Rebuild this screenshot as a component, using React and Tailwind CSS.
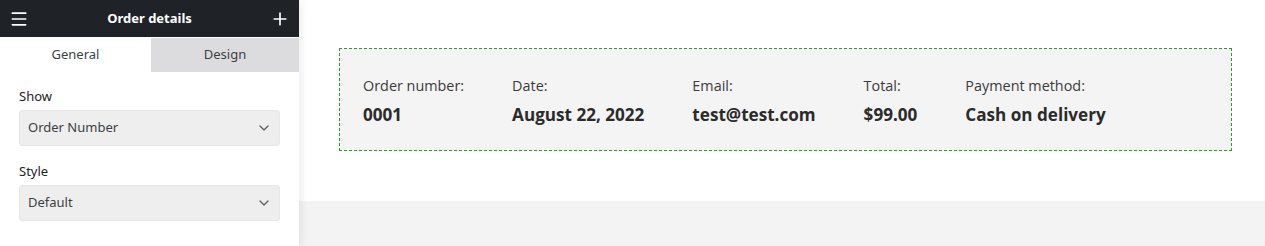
import { ChevronDown, Menu, Plus } from "lucide-react";

const fields = [
  { label: "Order number:", value: "0001" },
  { label: "Date:", value: "August 22, 2022" },
  { label: "Email:", value: "test@test.com" },
  { label: "Total:", value: "$99.00" },
  { label: "Payment method:", value: "Cash on delivery" },
];

function SelectBox({ label, value }) {
  return (
    <div className="px-[19px]">
      <label className="block text-[13px] text-[#1f2124] leading-[16px] mb-[6px]">
        {label}
      </label>
      <div className="h-[36px] bg-[#eeeeee] rounded-[3px] border border-[#e6e6e6] flex items-center justify-between pl-[8px] pr-[7px] text-[13px] text-[#3c3f44]">
        <span>{value}</span>
        <ChevronDown size={16} strokeWidth={2} className="text-[#5c5f63]" />
      </div>
    </div>
  );
}

export default function App() {
  return (
    <div className="flex w-[1265px] h-[246px] overflow-hidden bg-white">
      <aside
        className="w-[299px] shrink-0 bg-white flex flex-col relative z-10 shadow-[2px_0_8px_rgba(0,0,0,0.08)]"
        style={{ fontFamily: '"Noto Sans", "Open Sans", sans-serif' }}
      >
        <div className="h-[37px] bg-[#1f2327] text-white flex items-center justify-between px-[9px]">
          <Menu size={20} strokeWidth={2} />
          <span className="text-[13px] font-bold">Order details</span>
          <Plus size={20} strokeWidth={2} />
        </div>
        <div className="flex h-[35px] text-[13px] text-[#3c3f44] pt-[1px]">
          <div className="w-[151px] flex items-center justify-center bg-white">
            General
          </div>
          <div className="flex-1 flex items-center justify-center bg-[#dcdcde]">
            Design
          </div>
        </div>
        <div className="pt-[16px] flex flex-col gap-[17px]">
          <SelectBox label="Show" value="Order Number" />
          <SelectBox label="Style" value="Default" />
        </div>
      </aside>
      <main
        className="flex-1 flex flex-col"
        style={{ fontFamily: '"Open Sans", "Noto Sans", sans-serif' }}
      >
        <div className="h-[201px] pt-[48px] pl-[40px] pr-[33px]">
          <div className="h-[103px] bg-[#f4f4f4] border border-dashed border-[#2e9a2e] pl-[23px] flex gap-[48px] pt-[27px]">
            {fields.map((f) => (
              <div key={f.label} className="flex flex-col">
                <span className="text-[14.4px] text-[#3b3b3b] leading-[20px]">
                  {f.label}
                </span>
                <span className="text-[17.1px] font-bold text-[#2b2b2b] leading-[24px] mt-[7px]">
                  {f.value}
                </span>
              </div>
            ))}
          </div>
        </div>
        <div className="flex-1 bg-[#f3f3f3]" />
      </main>
    </div>
  );
}
